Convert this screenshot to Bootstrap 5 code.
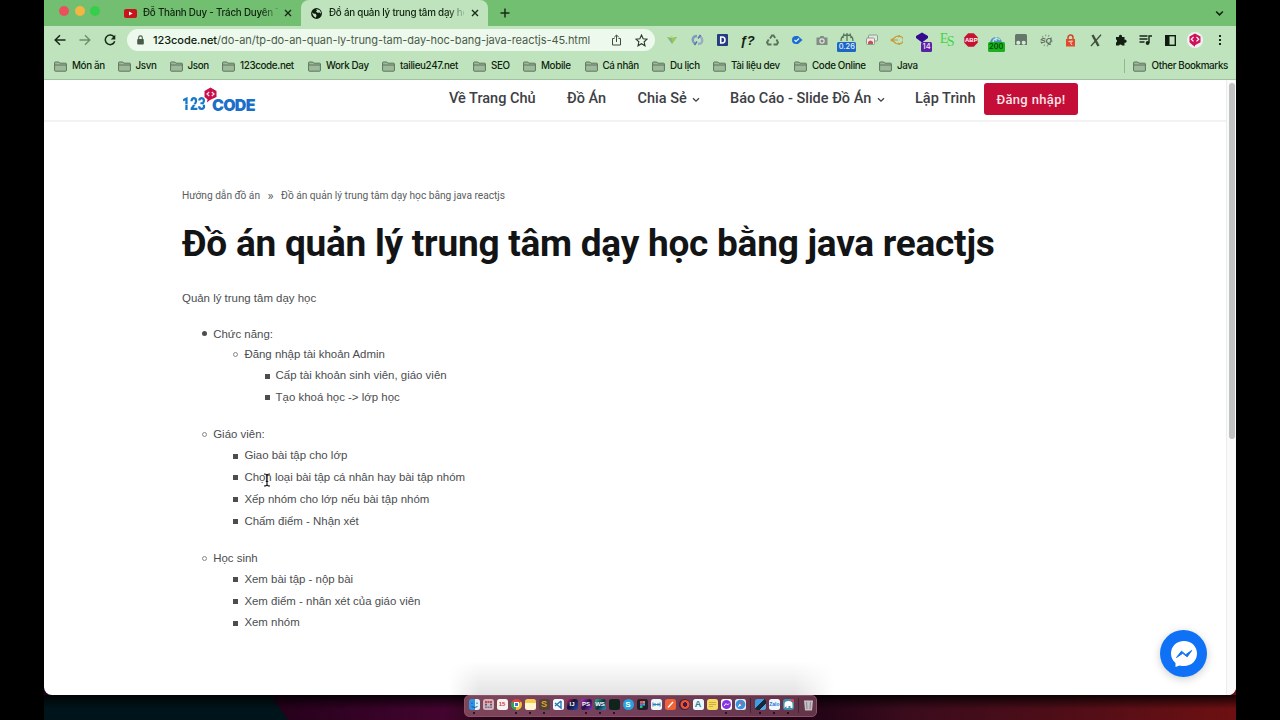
<!DOCTYPE html>
<html lang="vi">
<head>
<meta charset="utf-8">
<meta name="viewport" content="width=device-width, initial-scale=1">
<title>Đồ án quản lý trung tâm dạy học bằng java reactjs</title>
<link rel="stylesheet" href="https://cdn.jsdelivr.net/npm/bootstrap@5.3.0/dist/css/bootstrap.min.css">
<style>
body{background:#000;width:1280px;height:720px;overflow:hidden;font-family:"Liberation Sans",Arial,sans-serif}
svg{display:block;flex:none}
.desktop{width:1192px;height:720px;margin:0 auto;background:linear-gradient(#000000d0,#0000 14px) 0 695px/100% 25px no-repeat,linear-gradient(54.2deg,#00151b 0 197.5px,#0000 198.5px) 0 695px/100% 25px no-repeat,linear-gradient(90deg,#24001a 225px,#43042f 400px,#2a0718 440px,#240416 780px,#3a0b1c 860px,#4c0d18 1000px,#6d1012 1192px)}
.window{height:695px;background:#fff;border-radius:0 0 8px 8px;overflow:hidden}
.chrome-ui{font-family:Inter,sans-serif;color:#10230f;font-weight:500}
.tabstrip{height:26px;background:#72bf71}
.light{width:10px;height:10px;border-radius:50%;margin-right:5.7px}
.tab-item{height:26px;font-size:9.8px;letter-spacing:-.22px;white-space:nowrap}
.tab-on{background:#bfe4bd;border-radius:8px 8px 0 0;width:187px;padding-left:10px}
.tab-label{width:135px;-webkit-mask-image:linear-gradient(90deg,#000 118px,#0000 138px);mask-image:linear-gradient(90deg,#000 118px,#0000 138px)}
.toolbar{height:28px;background:#bfe4bd}
.omnibox{width:528px;height:22px;border-radius:11px;background:#edf9ec;font-size:11px;color:#4b5b4a;padding:0 7px 0 9px;font-weight:400}
.omnibox b{font-weight:500;color:#0f1d0f}
.url{letter-spacing:-.055px}
.exts>span{width:24.92px;height:24px;display:flex;align-items:center;justify-content:center;position:relative;flex:none}
.pill{position:absolute;font-size:7.5px;line-height:10px;height:10px;border-radius:1.5px;text-align:center;top:14px}
.bookmarks{height:26px;background:#bfe4bd;border-bottom:1.5px solid #a3bfa2;font-size:9.8px;letter-spacing:-.34px;padding:0 8px 1px 10px;white-space:nowrap}
.bm{display:flex;align-items:center;gap:5px;flex:none}
.bm svg{width:13px;height:11px}
.site-nav{height:42px;border-bottom:2px solid #f0f2f3;padding-left:138px;font-family:Roboto,sans-serif;font-size:14.5px;font-weight:500;color:#3d4045;width:1182px;white-space:nowrap}
.logo{width:267px;height:41px;font-family:Inter,sans-serif;font-weight:900;position:relative}
.logo .num{font-size:18.5px;color:#1878c8;transform:scaleX(.74);transform-origin:0 50%;width:38px;margin-right:-9px;font-family:Roboto,sans-serif;line-height:19px;-webkit-mask-image:linear-gradient(#000 9px,#0006 9px 10px,#000 10px);mask-image:linear-gradient(#000 9px,#0006 9px 10px,#000 10px)}
.logo .word{font-size:16px;color:#1b6fca;letter-spacing:-.75px;line-height:16px}
.login{width:94px;height:32px;border-radius:3px;background:#c40d37;color:#fbe3e8;font-size:13px;letter-spacing:.35px}
.page{width:1182px;padding-left:138px}
.crumbs{font-family:Roboto,sans-serif;font-size:10.2px;letter-spacing:-.02px;line-height:16px;color:#5a5c60;margin-top:66px}
h1.headline{font-family:Roboto,sans-serif;font-weight:700;font-size:37px;letter-spacing:-.25px;line-height:46px;color:#131416;margin:17px 0 0;white-space:nowrap}
.article{font-size:11.45px;color:#4b4d50}
.article .intro{line-height:20px;margin:21px 0 0}
.article ul{list-style:none;margin:0;padding-left:31.2px}
.article>ul{margin-top:15.6px}
.article .ln{height:20.8px;line-height:20.8px;display:flex;align-items:center}
.article .sq>li.ln{height:21.8px;line-height:21.8px}
.ln::before{content:"";width:5px;height:5px;margin-left:-11px;margin-right:6px;flex:none;background:#4b4d50}
.dot::before{border-radius:50%}
.ring::before{border-radius:50%;background:none;border:1px solid #888}
.track{width:10px;height:615px;background:#fafafa;border-left:1px solid #ececec;padding:3px 1px 0 2px}
.thumb{width:6px;height:356px;border-radius:3px;background:#c1c2c2}
.glow{position:absolute;left:405px;width:385px;height:34px;top:661px;background:linear-gradient(#0000,#0000001c);-webkit-mask-image:linear-gradient(90deg,#0000,#000 30px 345px,#0000);mask-image:linear-gradient(90deg,#0000,#000 30px 345px,#0000)}
.chat{position:absolute;left:1116px;top:630px;width:47px;height:47px;border-radius:50%;background:#0f72f6;box-shadow:0 2px 8px #0003}
.ibeam{position:absolute;left:219px;top:473px}
.dock{width:353px;height:22px;margin-left:420px;border-radius:5px;background:linear-gradient(90deg,#7c4558,#76405d 40%,#633347);padding-left:2px;border:1px solid #8a5368}
.dock>span{width:14px;height:18px;flex:none;display:flex;flex-direction:column;align-items:center;padding-top:3px}
.dock>i{width:1px;height:15px;background:#462334;margin:2px 2.7px 0}
.app{width:11px;height:11px;border-radius:2.5px;font:700 6px/11px "Liberation Sans",sans-serif;text-align:center;color:#fff}
.run::after{content:"";width:2px;height:2px;border-radius:50%;background:#12060c;margin-top:2px}
</style>
</head>
<body>
<svg width="0" height="0" class="position-absolute">
 <symbol id="folder" viewBox="0 0 13 11"><path d="M.6 9.200V1.600q0-.6.6-.6h3.600l1.100 1.200h5.800q.7 0 .7.700v6.600q0 .7-.7.7H1.300q-.7 0-.7-.7zM.7 4h11.600" fill="#9dbb9b" stroke="#60735f"/></symbol>
 <symbol id="cross" viewBox="0 0 8 8"><path d="M1 1l6 6M7 1L1 7" stroke="#1a2b1a" stroke-width="1.4"/></symbol>
 <symbol id="chev" viewBox="0 0 8 6"><path d="M1 1.2l3 3 3-3" fill="none" stroke="currentColor" stroke-width="1.3"/></symbol>
</svg>
<div class="desktop position-relative">
 <div class="window">
  <header class="chrome-ui">
   <div class="tabstrip d-flex">
    <div class="d-flex" style="padding:6px 0 0 15px;width:78px"><span class="light" style="background:#e9525c"></span><span class="light" style="background:#f3b640"></span><span class="light" style="background:#36ce4b"></span></div>
    <div class="tab-item d-flex align-items-center" style="width:179px;padding-left:2px">
     <svg width="13" height="9" viewBox="0 0 13 9"><rect width="13" height="9" rx="2" fill="#c8141b"/><path d="M5 2.500l3.600 2L5 6.500z" fill="#fff"/></svg>
     <span class="tab-label" style="margin:0 6px">Đỗ Thành Duy - Trách Duyên T</span>
     <svg width="8" height="8"><use href="#cross"/></svg>
    </div>
    <div class="tab-item tab-on d-flex align-items-center">
     <svg width="11" height="11" viewBox="0 0 11 11"><circle cx="5.500" cy="5.500" r="5.400" fill="#101c10"/><path d="M1 4.600l2 1.200 1.600 0 .9 1.400-.6 2.500L3 8.500 2 7M5 .9l1 1.600-1 1.300 1.700 1 2.100-.2 1.100 1.500L9.800 4 8.400 2z" fill="#bfe4bd"/></svg>
     <span class="tab-label" style="margin:0 7px">Đồ án quản lý trung tâm dạy họ</span>
     <svg width="8" height="8"><use href="#cross"/></svg>
    </div>
    <svg class="align-self-center" style="margin-left:8.500px" width="16" height="12" viewBox="0 0 16 12"><path d="M8 1.500v9M3.500 6h9" stroke="#1a2b1a" stroke-width="1.500"/></svg>
    <svg class="align-self-center ms-auto" style="margin-right:12px" width="9" height="7" viewBox="0 0 8 6"><use href="#chev"/></svg>
   </div>
   <div class="toolbar d-flex align-items-center">
    <svg style="margin-left:10px" width="12" height="12" viewBox="0 0 12 12"><path d="M11.500 6H1.500M6 1.200L1.200 6 6 10.800" fill="none" stroke="#192a19" stroke-width="1.500"/></svg>
    <svg style="margin-left:13px" width="12" height="12" viewBox="0 0 12 12"><path d="M.5 6h10M6 1.200L10.800 6 6 10.800" fill="none" stroke="#6e906d" stroke-width="1.400"/></svg>
    <svg style="margin:0 11px 0 13px" width="12" height="12" viewBox="0 0 12 12"><path d="M10.200 3.300A4.800 4.800 0 1 0 10.700 7.200" fill="none" stroke="#192a19" stroke-width="1.500"/><path d="M11.300.8v4.600H6.700z" fill="#192a19"/></svg>
    <div class="omnibox d-flex align-items-center">
     <svg width="9" height="10" viewBox="0 0 9 10"><rect x="1.200" y="4" width="6.600" height="5.500" rx=".8" fill="#4b5b4a"/><path d="M2.700 4.500V2.700a1.800 1.800 0 0 1 3.600 0v1.800" fill="none" stroke="#4b5b4a" stroke-width="1.100"/></svg>
     <span class="url" style="margin-left:8px"><b>123code.net</b>/do-an/tp-do-an-quan-ly-trung-tam-day-hoc-bang-java-reactjs-45.html</span>
     <svg class="ms-auto" width="11" height="12" viewBox="0 0 11 12"><path d="M3.500 4.500H1.500v6.500h8V4.500H7.500M5.500 8V1.200M3.200 3.300L5.500 1l2.300 2.300" fill="none" stroke="#3e4e3e"/></svg>
     <svg style="margin-left:13px" width="13" height="13" viewBox="0 0 13 13"><path d="M6.500 1l1.650 3.700 4 .4-3 2.700.85 4-3.500-2.100L3 11.800l.85-4-3-2.700 4-.4z" fill="none" stroke="#2b3b2b" stroke-width="1.100"/></svg>
    </div>
    <div class="exts d-flex" style="margin-left:5px">
     <span><svg width="12" height="12" viewBox="0 0 12 12"><path d="M1 3l5 1 5-1-5 7z" fill="#84b77e"/><path d="M6 4v6l5-7z" fill="#9cc65b"/><path d="M3 3l3-1 1 2z" fill="#bbd34f"/></svg></span>
     <span><svg width="13" height="12" viewBox="0 0 13 12"><g fill="none" stroke-width="2.400"><path d="M6 2C1 2 .5 7 4 10" stroke="#8099bd"/><path d="M7 10c5 0 5.500-5 2-8" stroke="#9aacc2"/><path d="M3.500 11L6 7.500M9.500 1L7 4.500" stroke="#5574bd" stroke-width="1.600"/></g></svg></span>
     <span><svg width="11" height="12" viewBox="0 0 11 12"><rect width="11" height="12" rx="1" fill="#253d80"/><path d="M3.700 3v6h1.500q2.800 0 2.800-3T5.200 3z" fill="none" stroke="#fff" stroke-width="1.500"/></svg></span>
     <span style="font:italic 700 13px 'Liberation Sans',sans-serif;color:#142014;letter-spacing:-.5px">ƒ?</span>
     <span><svg width="13" height="12" viewBox="0 0 13 12"><path d="M4 4.500L6 1.500h1.500L9.200 4M10.500 5.500l1.500 3-1.200 2H7.500M5.500 10.500H2.200L1 8.500l1.700-3" fill="none" stroke="#5b7159" stroke-width="1.900"/></svg></span>
     <span><svg width="12" height="10" viewBox="0 0 12 10"><path d="M1 5q0-4 4-4h2l4.500 4L7 9H5Q1 9 1 5z" fill="#1b6ed0"/><path d="M3.500 5l1.500 1.500L8 3.500" fill="none" stroke="#e6f4ff" stroke-width="1.200"/></svg></span>
     <span><svg width="12" height="11" viewBox="0 0 12 11"><path d="M.5 2.500h3L4.500 1h3l1 1.500h3V10H.5z" fill="#818c83"/><circle cx="6" cy="6" r="2.700" fill="#dce7dc"/><circle cx="6" cy="6" r="1.500" fill="#818c83"/></svg></span>
     <span><svg style="margin-top:-6px" width="14" height="10" viewBox="0 0 14 10"><path d="M1 9q0-6 6-6t6 6M7 9V1M4 1.500L3 6M10 1.500l1 4.500" fill="none" stroke="#56735b" stroke-width="1.300"/></svg><span class="pill" style="background:#1c66c5;color:#e5f0ff;width:19px">0.26</span></span>
     <span><svg width="12" height="12" viewBox="0 0 12 12"><rect x="2.500" y="1" width="9" height="6" rx="1" fill="#dcebdd" stroke="#8e9b8e"/><rect x=".5" y="4" width="8" height="6.500" rx="1" fill="#f4e8e8" stroke="#8e9b8e"/><path d="M2 10V8q2.500-3 5 0v2z" fill="#c55256"/></svg></span>
     <span><svg width="13" height="12" viewBox="0 0 13 12"><g fill="none" stroke="#c79a3a" stroke-width="1.200"><path d="M2 6L6 2.500M2 6l4 3.500M2 6h6M6 2.500l4-1M6 9.500l4 1"/><path d="M8 3a3.500 3.500 0 1 1 0 6"/></g><circle cx="2" cy="6" r="1.500" fill="#c79a3a"/></svg></span>
     <span><svg style="margin-top:-3px" width="14" height="13" viewBox="0 0 14 13"><path d="M7 .5L13 4v2L7 10.500 1 6V4z" fill="#320b91"/></svg><span class="pill" style="background:#5c20a2;color:#f1e6ff;width:11px;left:12px">14</span></span>
     <span style="font:14px 'Liberation Serif',serif;color:#42d349;letter-spacing:-1.5px"><span style="margin-top:-3px">E</span><span style="margin-top:4px">S</span></span>
     <span><svg width="14" height="14" viewBox="0 0 14 14"><path d="M4.200.3h5.600l3.900 3.900v5.600l-3.900 3.900H4.200L.3 9.800V4.200z" fill="#c71333"/></svg><span class="position-absolute" style="font:700 6px 'Liberation Sans',sans-serif;color:#fff">ABP</span></span>
     <span><svg style="margin-top:-2px" width="14" height="12" viewBox="0 0 14 12"><path d="M1 10a6 6 0 0 1 12 0" fill="#4b94c4"/><path d="M4 10a4 4 0 0 1 7-3M7 3v5" fill="none" stroke="#c4e6df" stroke-width="1.300"/></svg><span class="pill" style="background:#17b21e;color:#073b08;width:17px">200</span></span>
     <span><svg width="12" height="12" viewBox="0 0 12 12"><path d="M1.500 0h9Q12 0 12 1.500V11H0V1.500Q0 0 1.500 0z" fill="#65776a"/><circle cx="3.300" cy="8.800" r="2" fill="#d7ead5"/><circle cx="8.700" cy="8.800" r="2" fill="#d7ead5"/></svg></span>
     <span><svg width="13" height="13" viewBox="0 0 13 13"><circle cx="6.500" cy="6.500" r="5.200" fill="none" stroke="#8a9d88" stroke-width="1.800" stroke-dasharray="1.200 2"/></svg><span class="position-absolute" style="font:italic 700 8px 'Liberation Sans',sans-serif;color:#56665a">SQ</span></span>
     <span><svg width="9" height="13" viewBox="0 0 9 13"><path d="M2 6V3.500a2.500 2.500 0 0 1 5 0V6" fill="none" stroke="#cc462b" stroke-width="1.500"/><rect y="5" width="9" height="7.500" fill="#e04b2e"/><path d="M2.500 7.500l4-.5-2 2 1.500 2" fill="none" stroke="#ffe0d8"/></svg></span>
     <span><svg width="12" height="13" viewBox="0 0 12 13"><path d="M2.500 1l6 11" stroke="#42503f" stroke-width="2.500"/><path d="M11 .8L1 12" stroke="#42503f" stroke-width="1.300"/></svg></span>
     <span><svg width="12" height="12" viewBox="0 0 12 12"><path d="M1 3h3a1.600 1.600 0 1 1 3 0h2.500v2.700a1.600 1.600 0 1 1 0 3V11.500H7a1.600 1.600 0 0 0-3 0H1V8.600a1.600 1.600 0 0 0 0-3z" fill="#131f13"/></svg></span>
     <span><svg width="13" height="12" viewBox="0 0 13 12"><path d="M.5 2h8M.5 5h8M.5 8h5M10 9V2h3" fill="none" stroke="#192619" stroke-width="1.400"/><circle cx="8.600" cy="9" r="1.900" fill="#192619"/></svg></span>
     <span><svg width="11" height="11" viewBox="0 0 11 11"><rect x=".7" y=".7" width="9.600" height="9.600" fill="none" stroke="#111a11" stroke-width="1.400"/><path d="M1 1h3.500v9H1z" fill="#111a11"/></svg></span>
     <span><svg width="16" height="16" viewBox="0 0 16 16"><circle cx="8" cy="8" r="8" fill="#f3f1f3"/><path d="M8 1.500l5.500 3v5.700L8 13.200v1.600L5.500 13l-3-2.800V4.500z" fill="#cf1358"/><path d="M6.500 5L4.300 7.200l2.200 2.200M9.500 5l2.200 2.200-2.200 2.200" stroke="#fff" fill="none" stroke-width="1.200"/></svg></span>
     <span><svg width="4" height="12" viewBox="0 0 4 12"><path d="M1 1h2v2H1zM1 5h2v2H1zM1 9h2v2H1z" fill="#1a261a"/></svg></span>
    </div>
   </div>
   <div class="bookmarks d-flex align-items-center" id="bookmarks">
    <span class="bm ms-auto" style="border-left:1px solid #96b394;padding-left:8px"><svg><use href="#folder"/></svg><span>Other Bookmarks</span></span>
   </div>
  </header>
  <div class="d-flex">
   <main style="width:1182px">
    <nav class="site-nav d-flex">
     <div class="logo d-flex align-items-center">
      <span class="num" style="margin-top:7px">123</span><span class="word" style="margin:8px 0 0 1px">CODE</span>
      <svg class="position-absolute" style="left:22px;top:7px" width="13" height="16" viewBox="0 0 13 16"><path d="M6.500.5L12.500 4v6L6 13l-3 2.500.5-3.300L.5 10V4z" fill="#c8104c"/><path d="M5.200 5L3 7l2.200 2M7.800 5L10 7 7.800 9" fill="none" stroke="#ffe4ec" stroke-width="1.200"/></svg>
     </div>
     <div class="d-flex align-items-center" style="height:38.500px">
      <span style="width:118px">Về Trang Chủ</span><span style="width:70.500px">Đồ Án</span>
      <span class="d-flex align-items-center" style="width:92.500px">Chia Sẻ<svg width="8" height="6" style="margin:2px 0 0 5px"><use href="#chev"/></svg></span>
      <span class="d-flex align-items-center" style="width:185px">Báo Cáo - Slide Đồ Án<svg width="8" height="6" style="margin:2px 0 0 6px"><use href="#chev"/></svg></span>
      <span style="width:69px">Lập Trình</span>
      <span class="login d-flex align-items-center justify-content-center">Đăng nhập!</span>
     </div>
    </nav>
    <section class="page">
     <div class="crumbs d-flex">Hướng dẫn đồ án<span style="margin:0 7.500px;font-size:13px;line-height:15px">»</span>Đồ án quản lý trung tâm dạy học bằng java reactjs</div>
     <h1 class="headline">Đồ án quản lý trung tâm dạy học bằng java reactjs</h1>
     <div class="article">
      <p class="intro">Quản lý trung tâm dạy học</p>
      <ul>
       <li><div class="ln dot">Chức năng:</div>
        <ul><li><div class="ln ring">Đăng nhập tài khoản Admin</div>
         <ul class="sq"><li class="ln">Cấp tài khoản sinh viên, giáo viên</li><li class="ln">Tạo khoá học -&gt; lớp học</li></ul></li></ul></li>
      </ul>
      <ul>
       <li><div class="ln ring">Giáo viên:</div>
        <ul class="sq"><li class="ln">Giao bài tập cho lớp</li><li class="ln">Chọn loại bài tập cá nhân hay bài tập nhóm</li><li class="ln">Xếp nhóm cho lớp nếu bài tập nhóm</li><li class="ln">Chấm điểm - Nhận xét</li></ul></li>
      </ul>
      <ul>
       <li><div class="ln ring">Học sinh</div>
        <ul class="sq"><li class="ln">Xem bài tập - nộp bài</li><li class="ln">Xem điểm - nhân xét của giáo viên</li><li class="ln">Xem nhóm</li></ul></li>
      </ul>
     </div>
    </section>
   </main>
   <div class="track"><div class="thumb"></div></div>
  </div>
 </div>
 <div class="glow"></div>
 <div class="chat d-flex align-items-center justify-content-center"><svg width="28" height="28" viewBox="0 0 28 28"><path d="M14 1C6.500 1 1 6.300 1 13.500c0 4 1.700 7.200 4.500 9.400V27l4.200-1.600c1.300.4 2.800.6 4.300.6 7.500 0 13-5.300 13-12.500S21.500 1 14 1z" fill="#fff"/><path d="M6.500 17.500l5-6.300 4.200 3.500 6-4.200-4.500 6.300-4.500-3.500z" fill="#0f72f6" stroke="#0f72f6" stroke-linejoin="round"/></svg></div>
 <svg class="ibeam" width="8" height="14" viewBox="0 0 8 14"><path d="M1 1q3 0 3 1.500Q4 1 7 1M4 2v10M1 13q3 0 3-1.500Q4 13 7 13M2.800 8.500h2.400" fill="none" stroke="#111" stroke-width="1.100"/></svg>
 <div class="dock d-flex">
  <span class="run"><b class="app" style="background:linear-gradient(90deg,#2f94e8 50%,#e2eef8 50%)"><svg width="11" height="11" viewBox="0 0 11 11"><path d="M3 3.500v1.500M8 3.500v1.500M2.500 7.500q3 2 6 0" fill="none" stroke="#1b3e63" stroke-width=".8"/></svg></b></span>
  <span><b class="app" style="background:#d0b4bb"><svg width="11" height="11" viewBox="0 0 11 11"><path d="M2 3h2M4.500 3h2M7 3h2" stroke="#c5484a" stroke-width="1.800"/><path d="M2 5.600h2M7 5.600h2" stroke="#4f5d87" stroke-width="1.800"/><path d="M2 8.200h2M4.500 8.200h2M7 8.200h2" stroke="#8a6d83" stroke-width="1.600"/></svg></b></span>
  <span><b class="app" style="background:#f7f1f1;color:#d2423c">15</b></span>
  <span class="run"><b class="app" style="background:radial-gradient(#3779dd 0 2px,#fff 2px 3px,#0000 3px),conic-gradient(from 60deg,#f4c32e 120deg,#36a352 120deg 240deg,#dc493b 240deg);border-radius:50%"></b></span>
  <span class="run"><b class="app" style="background:linear-gradient(#f4cd4e 35%,#fff5d0 35%)"></b></span>
  <span class="run"><b class="app" style="background:#4c4439;color:#f09b27;font-size:9px">S</b></span>
  <span><b class="app" style="background:#f4f8fb"><svg width="11" height="11" viewBox="0 0 11 11"><path d="M8 2v7L2 4M8 2L2 7" stroke="#2476b8" stroke-width="1.400" fill="none"/></svg></b></span>
  <span><b class="app" style="background:linear-gradient(130deg,#d32a68,#141030 40%,#234bb7)">IJ</b></span>
  <span class="run"><b class="app" style="background:linear-gradient(130deg,#b334d3,#2b0e43 50%,#8035c6)">PS</b></span>
  <span class="run"><b class="app" style="background:linear-gradient(130deg,#1ec6a5,#10303b 50%,#2399ce)">WS</b></span>
  <span class="run"><b class="app" style="background:#10241d"></b></span>
  <span><b class="app" style="background:#23a5df;border-radius:50%;font-size:8px">S</b></span>
  <span><b class="app" style="background:#20202a"><svg width="11" height="11" viewBox="0 0 11 11"><path d="M3 2h2.500v2.300H3z" fill="#ee5a33"/><path d="M5.500 2H8v2.300H5.500z" fill="#f97669"/><path d="M3 4.300h2.500v2.300H3z" fill="#9b5df0"/><path d="M5.500 4.300H8v2.300H5.500z" fill="#2bb4f4"/><path d="M3 6.600h2.500v2.300H3z" fill="#23c979"/></svg></b></span>
  <span><b class="app" style="background:#eff5f8"><svg width="11" height="11" viewBox="0 0 11 11"><path d="M2 3.500v4M9 3.500v4M2 5.500h7M4 4v3M7 4v3" stroke="#2e82b0" fill="none"/></svg></b></span>
  <span><b class="app" style="background:#ee6438"><svg width="11" height="11" viewBox="0 0 11 11"><path d="M3 8.500L8 3" stroke="#fff" stroke-width="1.300"/></svg></b></span>
  <span><b class="app" style="background:radial-gradient(circle at 55% 50%,#3a1a58 0 2px,#ee5427 2.500px 4px,#47203588 5px),#40203a;border-radius:50%"></b></span>
  <span><b class="app" style="background:#eff6f9;color:#287f91;font-size:9px">A</b></span>
  <span><b class="app" style="background:#f7db61"><svg width="11" height="11" viewBox="0 0 11 11"><path d="M2 3.500h7M2 5.500h7M2 7.500h4" stroke="#bfa33c" stroke-width=".8"/></svg></b></span>
  <span class="run"><b class="app" style="background:#fff;"><svg width="11" height="11" viewBox="0 0 11 11"><circle cx="5.500" cy="5.500" r="4.500" fill="#8a32e5"/><path d="M3 7l2-2.500L6.500 6 8 4.500" stroke="#fff" fill="none"/></svg></b></span>
  <span><b class="app" style="background:#dfedf6"><svg width="11" height="11" viewBox="0 0 11 11"><circle cx="5.500" cy="5.500" r="4.800" fill="#3a91df"/><path d="M8.500 2.500L6.300 6.200 4.700 4.800z" fill="#ee5548"/><path d="M2.500 8.500l3.800-2.300-1.600-1.400z" fill="#fff"/></svg></b></span>
  <i></i>
  <span class="run"><b class="app" style="background:linear-gradient(135deg,#3f9ce3 45%,#16283d 45% 70%,#5aa3dc 70%)"></b></span>
  <span class="run"><b class="app" style="background:#f0f5fb;color:#236fd9;font-size:5px">Zalo</b></span>
  <span class="run"><b class="app" style="background:#418fa9"><svg width="11" height="11" viewBox="0 0 11 11"><path d="M1.500 9V5q0-3 4-3 4 0 4 3v4h-2V7h-2v2h-2V7z" fill="#fff"/><circle cx="9.500" cy="1.500" r="1.500" fill="#e5404c"/></svg></b></span>
  <i></i>
  <span><svg width="11" height="12" viewBox="0 0 11 12"><path d="M1 1.500h9L9 11.500H2z" fill="#c7bfc7"/><path d="M1 1.500h9M3.500 3l.5 7M7.500 3L7 10" stroke="#8e838e" fill="none"/></svg></span>
 </div>
</div>
<script>
// [label, distance in px to the next folder]
const marks=[["Món ăn",63.5],["Jsvn",52],["Json",52.5],["123code.net",86],["Work Day",74],["tailieu247.net",91],["SEO",50],["Mobile",61.5],["Cá nhân",67.5],["Du lịch",61],["Tài liệu dev",81],["Code Online",85],["Java",45]];
document.getElementById("bookmarks").insertAdjacentHTML("afterbegin",marks.map(m=>`<span class="bm" style="width:${m[1]}px"><svg><use href="#folder"/></svg><span>${m[0]}</span></span>`).join(""));
</script>
<script src="https://cdn.jsdelivr.net/npm/bootstrap@5.3.0/dist/js/bootstrap.bundle.min.js"></script>
</body>
</html>
